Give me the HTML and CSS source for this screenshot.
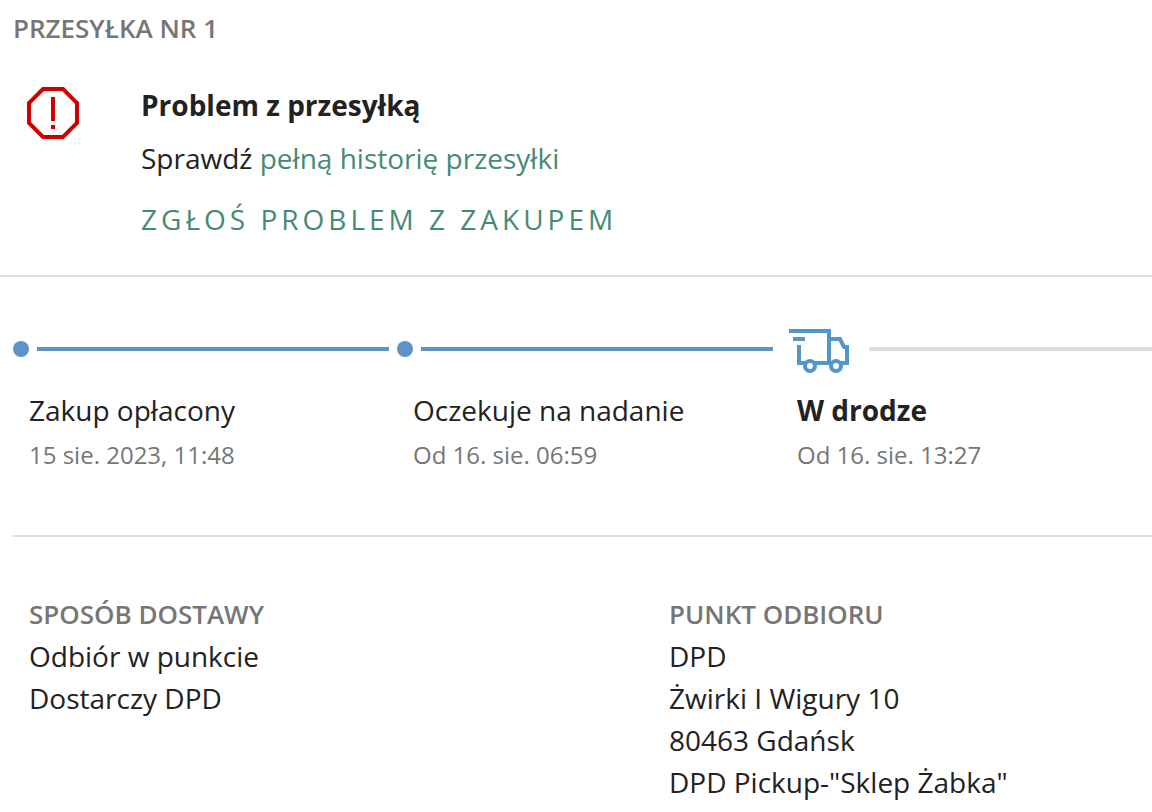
FILE: index.html
```html
<!DOCTYPE html>
<html lang="pl">
<head>
<meta charset="utf-8">
<meta name="viewport" content="width=device-width, initial-scale=1">
<title>Przesyłka nr 1</title>
<link rel="stylesheet" href="styles.css">
</head>
<body>
<main class="parcel">
  <header class="parcel-header">
    <h1 class="label">PRZESYŁKA NR 1</h1>
  </header>

  <section class="notice">
    <svg class="notice-icon" viewBox="0 0 52 52" aria-hidden="true">
      <path d="M16 2H36L50 16V36L36 50H16L2 36V16Z" fill="none" stroke="#d10000" stroke-width="4"/>
      <path d="M24 10h4v24h-4zM24 38h4v4h-4z" fill="#d10000"/>
    </svg>
    <div class="notice-body">
      <h2 class="notice-title">Problem z przesyłką</h2>
      <p class="notice-text">Sprawdź <a class="link" href="#historia">pełną historię przesyłki</a></p>
      <button class="report" type="button">ZGŁOŚ PROBLEM Z ZAKUPEM</button>
    </div>
  </section>

  <ol class="timeline">
    <li class="step">
      <div class="rail"><span class="dot"></span><span class="line"></span></div>
      <div class="step-text">
        <p class="step-name">Zakup opłacony</p>
        <p class="step-date">15 sie. 2023, 11:48</p>
      </div>
    </li>
    <li class="step">
      <div class="rail"><span class="dot"></span><span class="line"></span></div>
      <div class="step-text">
        <p class="step-name">Oczekuje na nadanie</p>
        <p class="step-date">Od 16. sie. 06:59</p>
      </div>
    </li>
    <li class="step step-current">
      <div class="rail">
        <svg class="truck" viewBox="0 0 80 48" aria-hidden="true">
          <g fill="none" stroke="#5396c8" stroke-width="4">
            <path d="M8 6H48V38M12 14H24M18 20V38H24M34 38H50M50 14H59L63 22H66V38H60"/>
            <circle cx="29" cy="41" r="5"/>
            <circle cx="55" cy="41" r="5"/>
          </g>
        </svg>
        <span class="line line-pending"></span>
      </div>
      <div class="step-text">
        <p class="step-name">W drodze</p>
        <p class="step-date">Od 16. sie. 13:27</p>
      </div>
    </li>
  </ol>

  <div class="details">
    <section class="detail">
      <h2 class="label">SPOSÓB DOSTAWY</h2>
      <p>Odbiór w punkcie</p>
      <p>Dostarczy DPD</p>
    </section>
    <section class="detail">
      <h2 class="label">PUNKT ODBIORU</h2>
      <address class="address">
        <p>DPD</p>
        <p>Żwirki I Wigury 10</p>
        <p>80463 Gdańsk</p>
        <p>DPD Pickup-"Sklep Żabka"</p>
      </address>
    </section>
  </div>
</main>
</body>
</html>
```

FILE: styles.css
```css
body {
  margin: 0;
  background: #fff;
  color: #222;
  font-family: "Open Sans", "Noto Sans", sans-serif;
  font-size: 28px;
  line-height: 42px;
}

h1, h2, p, ol {
  margin: 0;
  padding: 0;
}

.parcel {
  overflow: hidden;
}

.parcel-header {
  padding: 7px 13px 0;
}

.label {
  color: #767676;
  font-size: 26px;
  font-weight: 600;
}

.notice {
  display: flex;
  align-items: flex-start;
  gap: 62px;
  padding: 35px 27px;
  border-bottom: 2px solid #ddd;
}

.notice-icon {
  flex: none;
  width: 52px;
  height: 52px;
  margin-top: 3px;
}

.notice-title {
  font-size: 28px;
  font-weight: 700;
}

.notice-text {
  margin-top: 11px;
}

.link {
  color: #458b74;
  text-decoration: none;
}

.report {
  display: block;
  margin-top: 19px;
  padding: 0;
  border: 0;
  background: none;
  color: #458b74;
  font: inherit;
  letter-spacing: 4px;
  text-align: left;
  cursor: pointer;
}

/* The track keeps a full-width grid and runs past the right edge. */
.timeline {
  display: grid;
  grid-template-columns: repeat(3, 1fr);
  margin: 48px -13px 62px 13px;
  list-style: none;
}

.rail {
  display: flex;
  align-items: center;
  gap: 8px;
  height: 48px;
  padding-right: 8px;
}

.dot {
  flex: none;
  width: 16px;
  height: 16px;
  border-radius: 50%;
  background: #6192c5;
}

.line {
  flex: 1;
  height: 4px;
  background: #6192c5;
}

.line-pending {
  background: #ddd;
}

.truck {
  flex: none;
  width: 80px;
  height: 48px;
}

.step-text {
  padding: 16px 16px 0;
}

.step-current .step-name {
  font-weight: 700;
}

.step-date {
  margin-top: 6px;
  color: #767676;
  font-size: 24px;
  line-height: 36px;
}

.details {
  display: grid;
  grid-template-columns: 5fr 4fr;
  margin: 0 -13px 0 13px;
  padding-top: 56px;
  border-top: 2px solid #ddd;
}

.detail {
  padding-left: 16px;
}

.address {
  font-style: normal;
}
```
